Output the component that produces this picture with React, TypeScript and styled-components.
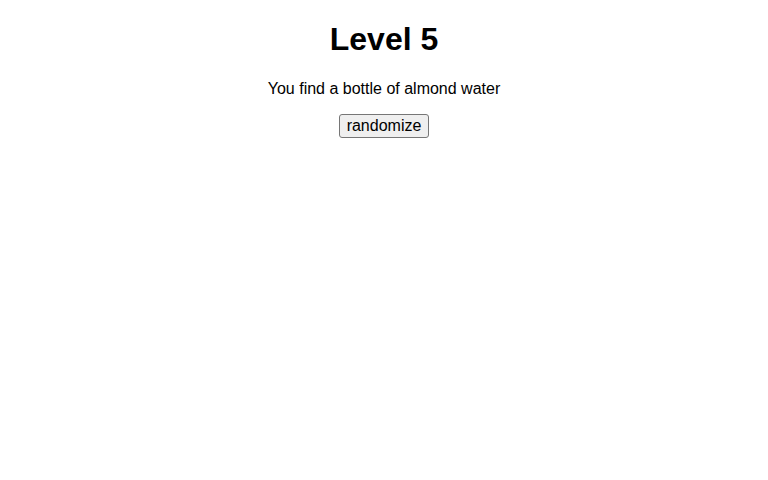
import React, { useState } from "react";
import styled, { createGlobalStyle } from "styled-components";

const Global = createGlobalStyle`
  html, body { margin: 0; padding: 0; background: #fff; }
  body { font-family: "Liberation Sans", Arial, sans-serif; color: #000; }
`;

const Page = styled.main`
  display: flex;
  flex-direction: column;
  align-items: center;
  text-align: center;
`;

const Title = styled.h1`
  font-size: 32px;
  font-weight: bold;
  margin: 21.44px 0;
`;

const Message = styled.p`
  font-size: 16px;
  margin: 0 0 16px;
`;

const Button = styled.button`
  font-family: "Liberation Sans", Arial, sans-serif;
  font-size: 16px;
  padding: 1px 7px;
  height: 24px;
  background: #efefef;
  border: 1px solid #767676;
  border-radius: 3px;
  color: #000;
  cursor: pointer;
`;

const items = ["almond water", "a flashlight", "a rope", "a battery"];

export default function App() {
  const [item, setItem] = useState("almond water");
  return (
    <>
      <Global />
      <Page>
        <Title>Level 5</Title>
        <Message>You find a bottle of {item}</Message>
        <Button onClick={() => setItem(items[Math.floor(Math.random() * items.length)])}>
          randomize
        </Button>
      </Page>
    </>
  );
}
